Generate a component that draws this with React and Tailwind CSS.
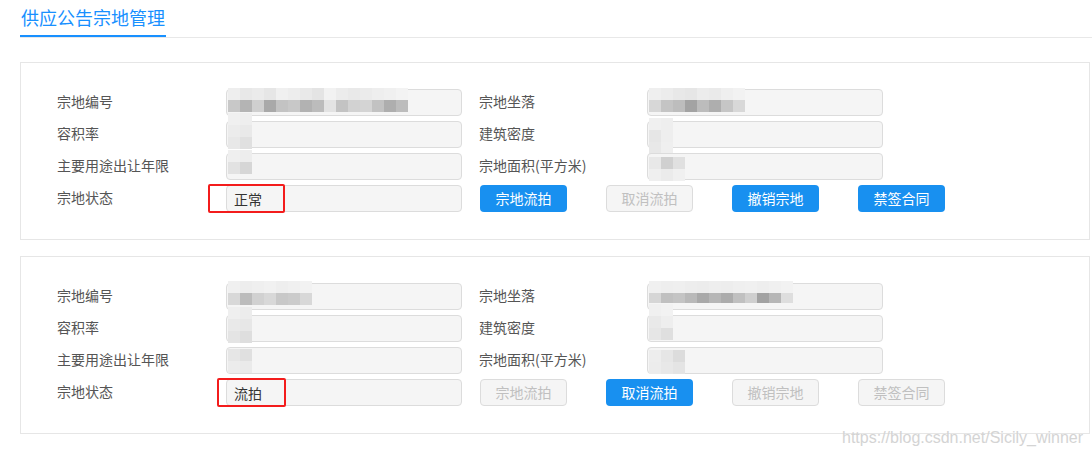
import React from "react";

function Mosaic({ left, top, rows, w = 12, h = 12 }) {
  return (
    <div className="absolute pointer-events-none" style={{ left, top }}>
      {rows.map((r, i) => (
        <div key={i} className="flex" style={{ marginLeft: r.off || 0 }}>
          {r.c.map((c, j) => (
            <div key={j} style={{ width: w, height: r.h || h, backgroundColor: c }} />
          ))}
        </div>
      ))}
    </div>
  );
}

function Field({ children, mosaic, mark }) {
  return (
    <div className="relative flex h-[27px] w-[236px] items-center rounded-[4px] border border-[#dcdcdc] bg-[#f5f5f5] pl-[7px] pt-[2px] text-[14px] text-[#333]">
      {children}
      {mosaic}
      {mark}
    </div>
  );
}

function Label({ children, w }) {
  return (
    <div className={`${w} mb-[4px] text-[14px] leading-[20px] text-[#555]`}>{children}</div>
  );
}

function Btn({ children, on }) {
  return on ? (
    <div className="flex h-[27px] w-[87px] items-center justify-center rounded-[4px] bg-[#1890f0] text-[14px] text-white">
      {children}
    </div>
  ) : (
    <div className="flex h-[27px] w-[87px] items-center justify-center rounded-[4px] border border-[#dcdcdc] bg-[#f5f5f5] text-[14px] text-[#c0c0c0]">
      {children}
    </div>
  );
}

function Card({ status, active, boxLeft, boxWidth, m }) {
  const labels = [
    ["宗地编号", "宗地坐落"],
    ["容积率", "建筑密度"],
    ["主要用途出让年限", "宗地面积(平方米)"],
  ];
  const btns = ["宗地流拍", "取消流拍", "撤销宗地", "禁签合同"];
  return (
    <div className="flex flex-col gap-[5px] border border-[#e6e6e6] bg-white pb-[27px] pl-[36px] pt-[26px]">
      {labels.map((l, i) => (
        <div key={i} className="flex items-center">
          <Label w="w-[169px]">{l[0]}</Label>
          <Field mosaic={m[i][0]} />
          <div className="w-[17px]" />
          <Label w="w-[168px]">{l[1]}</Label>
          <Field mosaic={m[i][1]} />
        </div>
      ))}
      <div className="flex items-center">
        <Label w="w-[169px]">宗地状态</Label>
        <Field
          mark={
            <div
              className="absolute top-[-2px] h-[29px] rounded-[2px] border-2 border-[#f31c1c]"
              style={{ left: boxLeft, width: boxWidth }}
            />
          }
        >
          {status}
        </Field>
        <div className="ml-[18px] flex gap-[39px]">
          {btns.map((b, i) => (
            <Btn key={b} on={active.includes(i)}>
              {b}
            </Btn>
          ))}
        </div>
      </div>
    </div>
  );
}

const m1 = [
  [
    <Mosaic
      left={1}
      top={-2}
      rows={[
        { h: 12, c: ["#eeeeee", "#e8e8e8", "#ebebeb", "#e6e6e6", "#f0f0f0", "#ededed", "#e9e9e9", "#e4e4e4", "#f2f2f2", "#ececec", "#e9e9e9", "#ebebeb", "#eeeeee", "#f0f0f0", "#f3f3f3"] },
        { h: 12, c: ["#c8c8c8", "#b4b4b4", "#cfcfcf", "#a9a9a9", "#c3c3c3", "#c8c8c8", "#b2b2b2", "#bcbcbc", "#e3e3e3", "#c3c3c3", "#d2d2d2", "#d4d4d4", "#c2c2c2", "#aeaeae", "#bcbcbc"] },
      ]}
    />,
    <Mosaic
      left={1}
      top={-2}
      rows={[
        { h: 12, c: ["#efefef", "#ececec", "#e8e8e8", "#e6e6e6", "#ececec", "#eaeaea", "#efefef", "#f2f2f2"] },
        { h: 12, c: ["#d7d7d7", "#c4c4c4", "#bdbdbd", "#a3a3a3", "#bcbcbc", "#aeaeae", "#c6c6c6", "#d8d8d8"] },
      ]}
    />,
  ],
  [
    <Mosaic
      left={1}
      top={-9}
      rows={[
        { c: ["#f0f0f0", "#eeeeee"] },
        { c: ["#ececec", "#e9e9e9"] },
        { c: ["#e8e8e8", "#e0e0e0"] },
      ]}
    />,
    <Mosaic
      left={1}
      top={-4}
      rows={[
        { c: ["#f0f0f0", "#eeeeee"] },
        { c: ["#e6e6e6", "#eeeeee"] },
        { c: ["#e8e8e8", "#efefef"] },
      ]}
    />,
  ],
  [
    <Mosaic
      left={1}
      top={-4}
      rows={[
        { c: ["#efefef", "#ededed"] },
        { c: ["#e2e2e2", "#d6d6d6"] },
      ]}
    />,
    <Mosaic
      left={1}
      top={3}
      rows={[
        { c: ["#e8e8e8", "#d0d0d0", "#e0e0e0"] },
        { c: ["#efefef", "#ebebeb", "#f0f0f0"] },
      ]}
    />,
  ],
];

const m2 = [
  [
    <Mosaic
      left={1}
      top={-3}
      rows={[
        { c: ["#f0f0f0", "#ededed", "#efefef", "#f1f1f1", "#eeeeee", "#f0f0f0", "#f2f2f2"] },
        { c: ["#d8d8d8", "#bcbcbc", "#d1d1d1", "#d8d8d8", "#c8c8c8", "#cbcbcb", "#d8d8d8"] },
      ]}
    />,
    <Mosaic
      left={1}
      top={-3}
      rows={[
        { c: ["#f0f0f0", "#eeeeee", "#efefef", "#ededed", "#ececec", "#eeeeee", "#ededed", "#efefef", "#f0f0f0", "#eeeeee", "#f0f0f0", "#f2f2f2"] },
        { h: 10, c: ["#d6d6d6", "#c0c0c0", "#c4c4c4", "#b9b9b9", "#a9a9a9", "#b6b6b6", "#acacac", "#c0c0c0", "#cfcfcf", "#a2a2a2", "#b6b6b6", "#dedede"] },
      ]}
    />,
  ],
  [
    <Mosaic
      left={1}
      top={-9}
      rows={[
        { c: ["#efefef", "#ececec"] },
        { c: ["#e9e9e9", "#e7e7e7"] },
        { c: ["#e4e4e4", "#dedede"] },
      ]}
    />,
    <Mosaic
      left={1}
      top={-12}
      rows={[
        { c: ["#f0f0f0", "#f2f2f2"] },
        { c: ["#e9e9e9", "#eeeeee"] },
        { c: ["#e6e6e6", "#dfdfdf"] },
      ]}
    />,
  ],
  [
    <Mosaic
      left={1}
      top={1}
      rows={[
        { c: ["#e6e6e6", "#e0e0e0"] },
        { c: ["#ececec", "#eaeaea"] },
      ]}
    />,
    <Mosaic
      left={1}
      top={2}
      rows={[
        { c: ["#ededed", "#e6e6e6", "#dcdcdc"] },
        { c: ["#ececec", "#e8e8e8", "#e4e4e4"] },
      ]}
    />,
  ],
];

export default function App() {
  return (
    <div className="relative h-[457px] w-[1092px] overflow-hidden bg-white font-['Noto_Sans_CJK_SC','Noto_Sans',sans-serif]">
      <div className="pl-[20px]">
        <div className="flex border-b border-[#e8e8e8]">
          <div className="border-b-2 border-[#1890ff] pb-[6px] pl-[1px] pr-[1px] pt-[5px] text-[18px] leading-[24px] text-[#1890ff]">
            供应公告宗地管理
          </div>
        </div>
      </div>
      <div className="flex flex-col gap-[16px] pl-[20px] pr-[2px] pt-[24px]">
        <Card status="正常" active={[0, 2, 3]} boxLeft={-19} boxWidth={77} m={m1} />
        <Card status="流拍" active={[1]} boxLeft={-10} boxWidth={69} m={m2} />
      </div>
      <div className="absolute left-[842px] top-[428px] font-['Liberation_Sans',sans-serif] text-[16px] leading-[20px] text-[#d4d4d4]">
        https://blog.csdn.net/Sicily_winner
      </div>
    </div>
  );
}
